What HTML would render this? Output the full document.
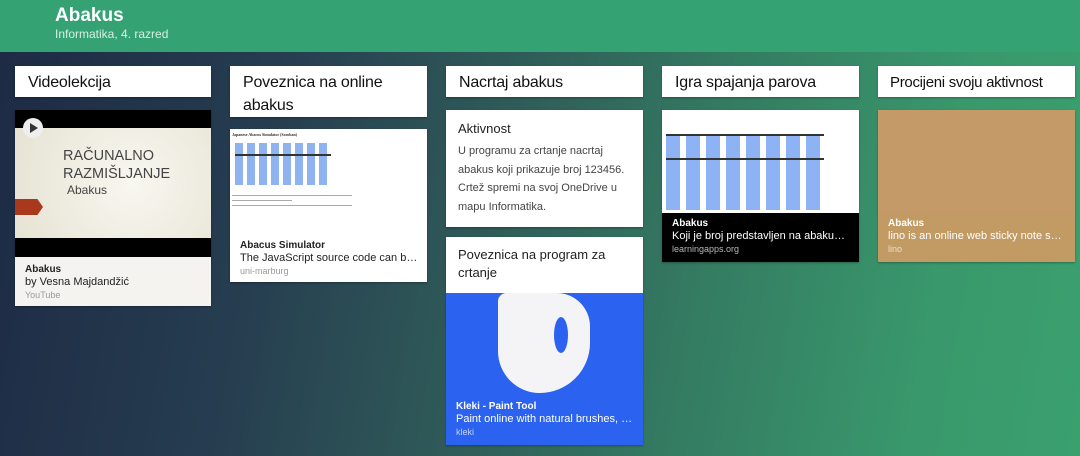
<!DOCTYPE html><html><head><meta charset="utf-8"><style>
*{margin:0;padding:0;box-sizing:border-box}
body{width:1080px;height:456px;overflow:hidden;font-family:"Liberation Sans",sans-serif;position:relative;background:linear-gradient(100deg,#1d2a44 0%,#263d50 25%,#2f5a58 45%,#347c62 65%,#39986c 85%,#3aa06e 100%)}
.hd{position:absolute;left:0;top:0;width:1080px;height:52px;background:#35a274}
.hd h1{position:absolute;left:55px;top:5px;font-size:19px;color:#fff;font-weight:bold}
.hd p{position:absolute;left:55px;top:27px;font-size:12px;color:#d8eee2}
.b{position:absolute;background:#fff;box-shadow:0 1px 2px rgba(0,0,0,.3)}
.t{font-size:16px;color:#111;padding:5px 13px;line-height:23px;letter-spacing:-0.2px;white-space:nowrap}
.ft{position:absolute;left:0;right:0;bottom:0;padding:6px 10px;font-size:10px;line-height:13px;color:#fff}
.ft b{display:block}
.ft span{display:block;font-size:11px;white-space:nowrap;overflow:hidden;text-overflow:ellipsis}
.ft i{font-style:normal;display:block;opacity:.7;font-size:9px}
</style></head><body>
<div class="hd"><h1>Abakus</h1><p>Informatika, 4. razred</p></div>

<div class="b t" style="left:15px;top:66px;width:196px;height:31px">Videolekcija</div>
<div class="b t" style="left:230px;top:66px;width:197px;height:51px;white-space:normal">Poveznica na online abakus</div>
<div class="b t" style="left:446px;top:66px;width:197px;height:31px">Nacrtaj abakus</div>
<div class="b t" style="left:662px;top:66px;width:197px;height:31px">Igra spajanja parova</div>
<div class="b t" style="left:878px;top:66px;width:197px;height:31px;font-size:15px;letter-spacing:-0.3px;padding-left:12px">Procijeni svoju aktivnost</div>

<div class="b" style="left:15px;top:110px;width:196px;height:196px;background:#f4f3f0">
 <div style="position:absolute;left:0;top:0;width:196px;height:147px;background:#000"></div>
 <div style="position:absolute;left:0;top:18px;width:196px;height:110px;background:radial-gradient(circle at 60% 50%,#f8f7f0,#e6e3d3)"></div>
 <div style="position:absolute;left:8px;top:8px;width:20px;height:20px;border-radius:50%;background:#eee"></div>
 <div style="position:absolute;left:15px;top:13px;border-left:8px solid #333;border-top:5px solid transparent;border-bottom:5px solid transparent"></div>
 <div style="position:absolute;left:0;top:89px;width:28px;height:16px;background:#a9391c;clip-path:polygon(0 0,80% 0,100% 50%,80% 100%,0 100%)"></div>
 <div style="position:absolute;left:48px;top:37px;font-size:14.5px;color:#444;line-height:18px">RAČUNALNO<br>RAZMIŠLJANJE</div>
 <div style="position:absolute;left:52px;top:73px;font-size:12px;color:#444">Abakus</div>
 <div style="position:absolute;left:10px;top:153px;font-size:10px;line-height:13px;color:#222"><b>Abakus</b><br><span style="font-size:11px">by Vesna Majdandžić</span><br><span style="color:#999;font-size:9px">YouTube</span></div>
</div>

<div class="b" style="left:230px;top:129px;width:197px;height:153px">
 <div style="position:absolute;left:2px;top:3px;font:bold 4px 'Liberation Serif';color:#333">Japanese Abacus Simulator (Soroban)</div>
 <div style="position:absolute;left:5px;top:14px;width:96px;height:42px;background:repeating-linear-gradient(90deg,#8fb3f0 0 8px,#fff 8px 12px)"></div>
 <div style="position:absolute;left:5px;top:25px;width:96px;height:2px;background:#333"></div>
 <div style="position:absolute;left:2px;top:66px;width:120px;height:1px;background:#aaa"></div>
 <div style="position:absolute;left:2px;top:71px;width:60px;height:1px;background:#aaa"></div>
 <div style="position:absolute;left:2px;top:76px;width:120px;height:1px;background:#aaa"></div>
 <div style="position:absolute;left:10px;top:110px;font-size:10px;line-height:13px;color:#222;width:178px"><b>Abacus Simulator</b><br><span style="font-size:11px;white-space:nowrap;display:block;overflow:hidden;text-overflow:ellipsis">The JavaScript source code can be foun…</span><span style="color:#999;font-size:9px">uni-marburg</span></div>
</div>

<div class="b" style="left:446px;top:110px;width:197px;height:117px;padding:11px 12px;color:#222">
 <div style="font-size:13px">Aktivnost</div>
 <div style="font-size:11px;line-height:18.5px;color:#444;margin-top:6px">U programu za crtanje nacrtaj abakus koji prikazuje broj 123456. Crtež spremi na svoj OneDrive u mapu Informatika.</div>
</div>

<div class="b" style="left:446px;top:237px;width:197px;height:208px;background:#2b63f0">
 <div style="position:absolute;left:0;top:0;width:197px;height:56px;background:#fff;font-size:13px;line-height:18px;padding:9px 12px;color:#222">Poveznica na program za crtanje</div>
 <div style="position:absolute;left:52px;top:56px;width:92px;height:100px;background:#f4f4f6;border-radius:10px 40px 60px 50px"></div>
 <div style="position:absolute;left:108px;top:80px;width:14px;height:36px;background:#2b63f0;border-radius:50%"></div>
 <div class="ft"><b>Kleki - Paint Tool</b><span>Paint online with natural brushes, layers, …</span><i>kleki</i></div>
</div>

<div class="b" style="left:662px;top:110px;width:197px;height:152px;background:#000">
 <div style="position:absolute;left:0;top:0;width:197px;height:103px;background:#fff"></div>
 <div style="position:absolute;left:4px;top:26px;width:158px;height:74px;background:repeating-linear-gradient(90deg,#8db3f4 0 14px,#fff 14px 20px)"></div>
 <div style="position:absolute;left:4px;top:24px;width:158px;height:2px;background:#333"></div>
 <div style="position:absolute;left:4px;top:48px;width:158px;height:2px;background:#333"></div>
 <div class="ft"><b>Abakus</b><span>Koji je broj predstavljen na abakusu?</span><i>learningapps.org</i></div>
</div>

<div class="b" style="left:878px;top:110px;width:197px;height:152px;background:#c29a63">
 <div style="position:absolute;left:0;top:0;width:197px;height:103px;background:#c49a68"></div>
 <div class="ft"><b>Abakus</b><span>lino is an online web sticky note service t…</span><i>lino</i></div>
</div>
</body></html>
